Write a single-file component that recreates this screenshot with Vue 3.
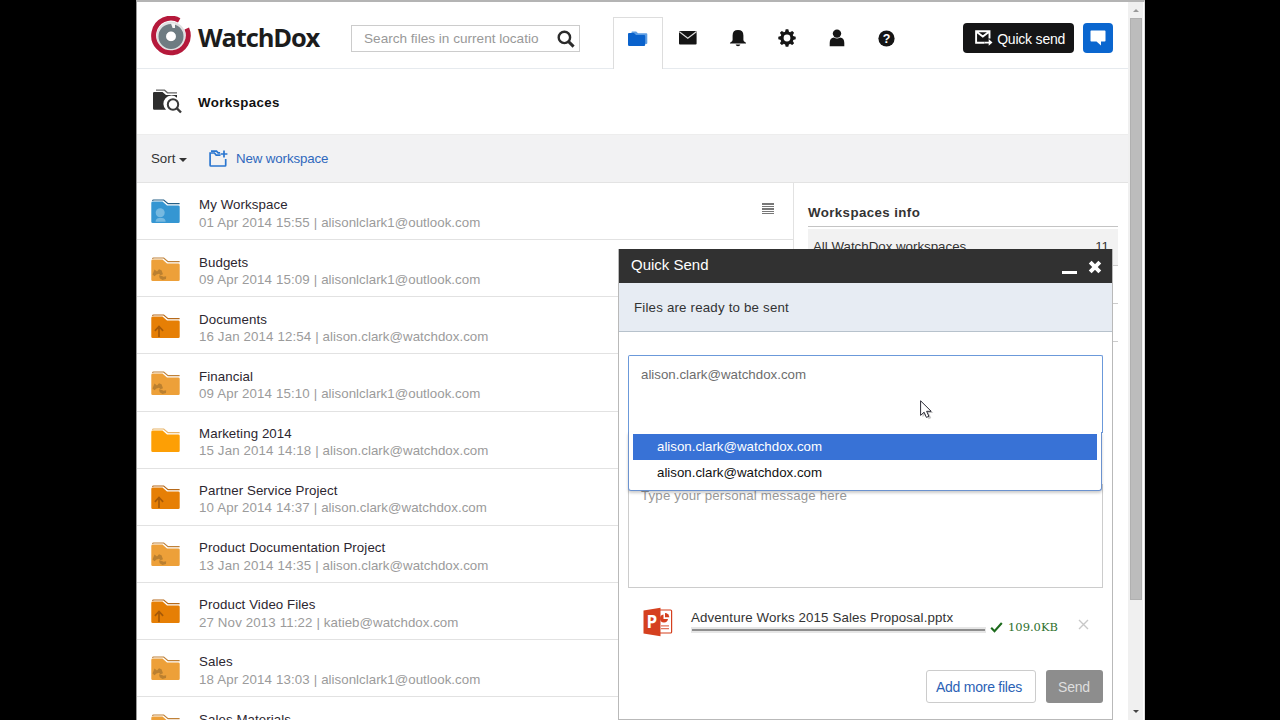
<script setup>
import { ref } from 'vue'

const workspaces = [
  { name: 'My Workspace', date: '01 Apr 2014 15:55', owner: 'alisonlclark1@outlook.com', type: 'personal' },
  { name: 'Budgets', date: '09 Apr 2014 15:09', owner: 'alisonlclark1@outlook.com', type: 'shared' },
  { name: 'Documents', date: '16 Jan 2014 12:54', owner: 'alison.clark@watchdox.com', type: 'upload' },
  { name: 'Financial', date: '09 Apr 2014 15:10', owner: 'alisonlclark1@outlook.com', type: 'shared' },
  { name: 'Marketing 2014', date: '15 Jan 2014 14:18', owner: 'alison.clark@watchdox.com', type: 'plain' },
  { name: 'Partner Service Project', date: '10 Apr 2014 14:37', owner: 'alison.clark@watchdox.com', type: 'upload' },
  { name: 'Product Documentation Project', date: '13 Jan 2014 14:35', owner: 'alison.clark@watchdox.com', type: 'shared' },
  { name: 'Product Video Files', date: '27 Nov 2013 11:22', owner: 'katieb@watchdox.com', type: 'upload' },
  { name: 'Sales', date: '18 Apr 2014 13:03', owner: 'alisonlclark1@outlook.com', type: 'shared' },
  { name: 'Sales Materials', type: 'shared' }
]

const recipient = ref('alison.clark@watchdox.com')
const suggestions = ['alison.clark@watchdox.com', 'alison.clark@watchdox.com']
const selected = ref(0)
const progress = ref(100)

const pick = (i) => {
  selected.value = i
  recipient.value = suggestions[i]
}
</script>

<template>
  <div class="screen">
    <div class="window">
      <div class="page">
        <header class="topbar">
          <div class="brand">
            <svg class="brand-mark" viewBox="0 0 40 40">
              <circle cx="20" cy="20" r="14.6" fill="#dfe1e2" />
              <path d="M28.200 4.300A17.300 17.300 0 1 0 35.800 12.600" fill="none" stroke="#b5193b" stroke-width="4.900" />
              <circle cx="20" cy="20.400" r="8.700" fill="none" stroke="#6e7c82" stroke-width="7.600" />
              <path d="M20 7.600h4v4.400h-2.400z" fill="#f4f5f5" />
              <circle cx="20" cy="20.400" r="4.700" fill="#fff" />
            </svg>
            <span class="brand-name">WatchDox</span>
          </div>
          <div class="search">
            <span>Search files in current locatio</span>
            <svg viewBox="0 0 18 18" width="18" height="18">
              <circle cx="7.400" cy="7.400" r="5.700" fill="none" stroke="#2b2b2b" stroke-width="2.400" />
              <path d="M11.600 11.600l5 5" stroke="#2b2b2b" stroke-width="2.900" />
            </svg>
          </div>
          <nav class="tabs">
            <a class="tab active">
              <svg width="20" height="16" viewBox="0 0 20 16">
                <path d="M3.500 3V1.200q0-.7.7-.7h4l1.800 1.700h8.300q1 0 1 1V12q0 1-1 1h-.8" fill="#5d9de3" />
                <path d="M0 3q0-1 1-1h5l2 2h8q1.200 0 1.200 1.200v8.600q0 1.200-1.200 1.200H1.200Q0 15 0 13.800z" fill="#0a62cc" />
              </svg>
            </a>
            <a class="tab">
              <svg width="18" height="14" viewBox="0 0 18 14">
                <rect width="17.600" height="13.600" rx="1" fill="#151515" />
                <path d="M.3.8l8.500 6.400L17.300.8" fill="none" stroke="#ddd" stroke-width="1.200" />
              </svg>
            </a>
            <a class="tab">
              <svg width="18" height="18" viewBox="0 0 18 18">
                <path d="M3.600 11V6.400Q3.600 1 9 1t5.400 5.400V11q0 1.400 1.900 2.200.8.300.8 1.300H.9q0-1 .8-1.300Q3.600 12.400 3.600 11z" fill="#151515" />
                <path d="M6.600 15.600h4.800q-.5 1.700-2.400 1.700t-2.400-1.700z" fill="#151515" />
              </svg>
            </a>
            <a class="tab">
              <svg width="18" height="18" viewBox="-9 -9 18 18">
                <circle r="5" fill="none" stroke="#151515" stroke-width="3.200" />
                <g fill="#151515">
                  <path v-for="n in 8" :key="n" d="M-2-6L-1.300-8.700H1.300L2-6z" :transform="`rotate(${n * 45})`" />
                </g>
              </svg>
            </a>
            <a class="tab">
              <svg width="16" height="18" viewBox="0 0 16 18">
                <circle cx="8" cy="4.600" r="4.200" fill="#151515" />
                <path d="M.7 17.300v-3.300q0-5 4.300-5.400Q8 10.400 11 8.600q4.300.4 4.300 5.400v3.300z" fill="#151515" />
              </svg>
            </a>
            <a class="tab">
              <svg width="17" height="17" viewBox="0 0 17 17">
                <circle cx="8.500" cy="8.500" r="8.100" fill="#151515" />
                <text x="8.500" y="12.900" text-anchor="middle" class="qmark">?</text>
              </svg>
            </a>
          </nav>
          <button class="quick-send">
            <svg width="18" height="16" viewBox="0 0 18 16">
              <path d="M9.500 12.800H1.100V1.300h13.400V8.500M1.500 1.800l6.300 4.700 6.300-4.700" fill="none" stroke="#fff" stroke-width="1.900" />
              <path d="M9.500 11.700h4.200V9l3.800 3.600-3.800 3.200v-2.200H9.500z" fill="#fff" />
            </svg>
            <span>Quick send</span>
          </button>
          <button class="chat">
            <svg width="16" height="16" viewBox="0 0 16 16">
              <path d="M1.300 .5h13.400q.8 0 .8.8v9.400q0 .8-.8.8h-3.700v4l-4.500-4H1.300q-.8 0-.8-.8V1.300q0-.8.8-.8z" fill="#fff" />
            </svg>
          </button>
        </header>

        <div class="heading">
          <svg width="29" height="25" viewBox="0 0 29 25">
            <path d="M3 1.200h8.500l3 2.600h9.500" fill="none" stroke="#666" stroke-width="1.300" />
            <path d="M0 4.200q0-1.200 1.200-1.200H9.500l3.500 3h11v2.700A8 8 0 0 0 13 20.700H1.200Q0 20.700 0 19.500z" fill="#2e2e2e" />
            <circle cx="20" cy="15.500" r="5.200" fill="#fff" stroke="#3a3a3a" stroke-width="2" />
            <path d="M23.700 19.200l4.300 4.300" stroke="#3a3a3a" stroke-width="2.400" />
          </svg>
          <h1>Workspaces</h1>
        </div>

        <div class="toolbar">
          <span class="sort">Sort<i class="caret"></i></span>
          <a class="new-workspace">
            <svg width="19" height="17" viewBox="0 0 19 17">
              <path d="M11.500 5.200H7.200L5.500 3H1.100v12.300q0 .7.700.7H16q.7 0 .7-.7V9M2 1.200h5.500l1.600 1.600h2" fill="none" stroke="#2a76cf" stroke-width="1.700" />
              <path d="M15 .6v6.800M11.600 4h6.800" stroke="#2a76cf" stroke-width="1.700" />
            </svg>
            <span>New workspace</span>
          </a>
        </div>

        <div class="content">
          <ul class="list">
            <li v-for="(w, i) in workspaces" :key="w.name" class="row">
              <svg class="folder" :class="w.type" viewBox="0 0 29 25">
                <path class="back" d="M1.500 1.800q.2-.8 1-.8h10.200L17 4.600h11.600" />
                <path class="front" d="M.3 4Q.3 2.600 1.700 2.600h9.800L16 6.400h11.300q1.400 0 1.400 1.300v15q0 1.300-1.400 1.300H1.700Q.3 24 .3 22.700z" />
                <g v-if="w.type === 'personal'" fill="#76b9e0">
                  <circle cx="9.200" cy="13.800" r="4.500" />
                  <path d="M4.500 22.700q.3-3.400 3.700-3.700h2.800q3.400.3 3.700 3.700z" />
                </g>
                <path v-if="w.type === 'upload'" d="M8 23v-10.500M3.900 16.800L8 12.400l4.100 4.400" fill="none" stroke="#a65a08" stroke-width="1.700" />
                <g v-if="w.type === 'shared'" fill="#bb8030">
                  <path d="M1.500 17.500l2-5 2.500 2 2-2.300 2.500 1 1.500 4-2.500 1-1.500-1.500-2.500.8-2 1.800z" />
                  <path d="M8 18.300l3 .7 1.500.8 2.700-.6-.2 2.800-3.500.9-2.800-1.600z" />
                </g>
              </svg>
              <div class="info">
                <div class="name">{{ w.name }}</div>
                <div v-if="w.date" class="meta"><span>{{ w.date }} | </span><span class="owner">{{ w.owner }}</span></div>
              </div>
              <span v-if="i === 0" class="menu"><i v-for="n in 5" :key="n"></i></span>
            </li>
          </ul>
          <aside class="side">
            <h2>Workspaces info</h2>
            <div class="stat shaded"><span>All WatchDox workspaces</span><span>11</span></div>
            <div class="stat"></div>
            <div class="stat"></div>
          </aside>
        </div>
      </div>

      <div class="scrollbar">
        <i class="arrow up"></i>
        <div class="thumb"></div>
        <i class="arrow down"></i>
      </div>
    </div>

    <section class="dialog">
      <div class="dialog-head">
        <span>Quick Send</span>
        <i class="minimize"></i>
        <svg width="14" height="14" viewBox="0 0 14 14">
          <path d="M2.200 2.200l9.600 9.600M11.800 2.200l-9.600 9.600" stroke="#fff" stroke-width="4" />
        </svg>
      </div>
      <div class="notice">Files are ready to be sent</div>
      <div class="dialog-body">
        <div class="recipients">
          <span>{{ recipient }}</span>
          <ul class="suggest">
            <li v-for="(s, i) in suggestions" :key="i" :class="{ on: i === selected }" @click="pick(i)">{{ s }}</li>
          </ul>
        </div>
        <div class="message">Type your personal message here</div>
        <div class="file">
          <svg width="30" height="30" viewBox="0 0 30 30">
            <rect x="15" y="3" width="13.600" height="23" rx="1" fill="#fff" stroke="#d5401f" stroke-width="1.200" />
            <path d="M20.500 7.500a4 4 0 1 0 4.500 4.500h-4.500z" fill="#d5401f" />
            <path d="M22 6v4.300h4.300A4.300 4.300 0 0 0 22 6z" fill="#d5401f" />
            <path d="M18 18.800h8M18 21.600h8" stroke="#e0765c" stroke-width="1.300" />
            <path d="M.5 3.500L17.500.7v28.500L.5 26.500z" fill="#d5401f" />
            <text x="8.800" y="21" text-anchor="middle" class="ppt">P</text>
          </svg>
          <div class="file-info">
            <div class="file-name">Adventure Works 2015 Sales Proposal.pptx</div>
            <div class="track"><div class="bar" :style="{ width: progress + '%' }"></div></div>
          </div>
          <svg class="check" width="13" height="11" viewBox="0 0 13 11">
            <path d="M1.200 5.800l3.300 3.400L11.800 1" fill="none" stroke="#1d6b1d" stroke-width="2.100" />
          </svg>
          <span class="size">109.0KB</span>
          <svg class="remove" width="11" height="11" viewBox="0 0 11 11">
            <path d="M1 1l9 9M10 1l-9 9" stroke="#c8c8c8" stroke-width="1.400" />
          </svg>
        </div>
        <div class="actions">
          <button class="add">Add more files</button>
          <button class="send">Send</button>
        </div>
      </div>
    </section>

    <svg class="cursor" width="15" height="20" viewBox="0 0 15 20">
      <path d="M2.500 3v14.300l3.600-3.300 2.600 5.200 2.600-1.300-2.500-4.800h4.500z" fill="#000" opacity=".22" />
      <path d="M.6.8v14.600l3.500-3.200 2.300 5.200 2.500-1.100-2.300-5h4.600z" fill="#fff" stroke="#2a2a35" stroke-width="1" />
    </svg>
  </div>
</template>

<style>
body {
  margin: 0;
  background: #000;
}
</style>

<style scoped>
.screen {
  position: relative;
  width: 1280px;
  height: 720px;
  overflow: hidden;
  background: #000;
  font-family: "Liberation Sans", Arial, sans-serif;
  font-size: 13.3px;
  color: #333;
}

.screen * {
  box-sizing: border-box;
}

button {
  font: inherit;
  padding: 0;
  border: 0;
}

ul, h1, h2 {
  margin: 0;
  padding: 0;
  list-style: none;
}

.window {
  width: 1009px;
  height: 720px;
  margin-left: 136px;
  display: flex;
  background: #fff;
  border-top: 2px solid #b4b4b4;
  border-left: 1px solid #999;
  border-right: 1px solid #ddd;
  overflow: hidden;
}

.page {
  width: 991px;
}

.topbar {
  display: flex;
  height: 67px;
  padding-left: 14px;
  border-bottom: 1px solid #e6eaee;
}

.brand {
  display: flex;
  width: 200px;
}

.brand-mark {
  width: 40px;
  height: 40px;
  margin-top: 14px;
}

.brand-name {
  margin: 17px 0 0 7px;
  font-family: "Open Sans", sans-serif;
  font-weight: 700;
  font-size: 25.5px;
  line-height: 36px;
  letter-spacing: -1.15px;
  color: #1c1c1c;
}

.search {
  display: flex;
  align-items: center;
  justify-content: space-between;
  width: 229px;
  height: 27px;
  margin-top: 23px;
  padding: 0 4px 0 12px;
  border: 1px solid #ccc;
  color: #999;
  font-size: 13.6px;
}

.tabs {
  display: flex;
  height: 51px;
  margin: 15px 0 0 33px;
}

.tab {
  display: flex;
  align-items: center;
  justify-content: center;
  width: 49.7px;
  height: 51px;
  padding: 0 0 9px 1px;
}

.tab.active {
  height: 52px;
  padding: 0 0 10px;
  background: #fff;
  border: 1px solid #ddd;
  border-bottom: 0;
}

.qmark {
  font: bold 12.5px "Liberation Sans", sans-serif;
  fill: #fff;
}

.quick-send {
  display: flex;
  align-items: center;
  width: 111px;
  height: 30px;
  margin: 21px 0 0 52px;
  padding-left: 12px;
  gap: 4px;
  border-radius: 4px;
  background: #151516;
  color: #fff;
  font-size: 14px;
  letter-spacing: -0.2px;
}

.quick-send span {
  margin-top: 1px;
}

.chat {
  display: flex;
  align-items: center;
  justify-content: center;
  width: 30px;
  height: 30px;
  margin: 21px 0 0 9px;
  border-radius: 4px;
  background: #0a66cf;
}

.heading {
  display: flex;
  align-items: center;
  height: 65px;
  padding-left: 16px;
  gap: 16px;
}

.heading h1 {
  padding-top: 1px;
  font-size: 13.3px;
  letter-spacing: 0.38px;
  color: #111;
}

.toolbar {
  display: flex;
  align-items: center;
  height: 49px;
  padding-left: 14px;
  background: #f2f2f3;
  border-top: 1px solid #ededed;
  border-bottom: 1px solid #e3e3e3;
}

.sort {
  display: flex;
  align-items: center;
  width: 58px;
}

.caret {
  margin: 2px 0 0 4px;
  border: 4px solid transparent;
  border-top-color: #333;
  border-bottom: 0;
}

.new-workspace {
  display: flex;
  align-items: center;
  gap: 8px;
  color: #2f68bd;
  letter-spacing: -0.12px;
}

.content {
  display: flex;
  height: 540px;
}

.list {
  width: 656px;
}

.row {
  display: flex;
  height: 57.14px;
  padding: 13.4px 0 0 14px;
  border-bottom: 1px solid #e2e2e2;
}

.folder {
  width: 29px;
  height: 25px;
  margin-top: 3px;
}

.folder .front {
  fill: #eda039;
}

.folder .back {
  fill: none;
  stroke: #bf8138;
  stroke-width: 1.2px;
}

.folder.personal .front {
  fill: #3596d2;
}

.folder.personal .back {
  stroke: #245f86;
}

.folder.upload .front {
  fill: #e67f05;
}

.folder.upload .back {
  stroke: #b5691a;
}

.folder.plain .front {
  fill: #fd9f05;
}

.folder.plain .back {
  stroke: #e8b468;
}

.info {
  flex: 1;
  margin-left: 19px;
  line-height: 17.4px;
  white-space: nowrap;
}

.name {
  color: #2c2630;
  letter-spacing: 0.08px;
}

.meta {
  color: #9b9b9b;
  letter-spacing: 0.13px;
}

.owner {
  letter-spacing: 0.03px;
}

.menu {
  display: flex;
  flex-direction: column;
  gap: 1px;
  width: 12px;
  margin: 7px 19px 0 0;
}

.menu i {
  height: 1.4px;
  background: #777;
}

.side {
  width: 335px;
  padding: 20px 10px 0 14px;
  border-left: 1px solid #e2e2e2;
}

.side h2 {
  height: 24px;
  padding-top: 1px;
  border-bottom: 1px solid #c4c4c4;
  font-size: 13.3px;
  line-height: 17px;
  letter-spacing: 0.4px;
}

.stat {
  display: flex;
  justify-content: space-between;
  height: 38px;
  padding: 10px 9px 0 5px;
  border-bottom: 1px solid #ccc;
}

.stat.shaded {
  height: 37px;
  margin-top: 2px;
  background: #f2f2f2;
}

.scrollbar {
  display: flex;
  flex-direction: column;
  align-items: center;
  width: 15px;
  background: #f0f0f0;
}

.thumb {
  width: 12px;
  height: 582px;
  margin-top: 6px;
  background: #bcbcbc;
  border: 1px solid #b0b0b0;
}

.arrow {
  border: 3.5px solid transparent;
}

.arrow.up {
  margin-top: 7px;
  border-top: 0;
  border-bottom-color: #999;
}

.arrow.down {
  margin-top: 110px;
  border-bottom: 0;
  border-top-color: #444;
}

.dialog {
  position: absolute;
  left: 618px;
  top: 249px;
  width: 495px;
  height: 471px;
  background: #fff;
  border: 1px solid #b9b9b9;
  border-top: 0;
}

.dialog-head {
  display: flex;
  height: 34px;
  padding: 0 10px 0 12px;
  background: #313131;
  color: #fff;
  font-size: 15px;
  line-height: 32px;
}

.dialog-head span {
  flex: 1;
}

.dialog-head svg {
  margin-top: 11px;
}

.minimize {
  width: 15px;
  height: 3px;
  margin: 22px 11px 0 0;
  background: #fff;
}

.notice {
  height: 49px;
  padding-left: 15px;
  background: #e7ecf3;
  border-bottom: 1px solid #b7c2cc;
  line-height: 50px;
  letter-spacing: 0.19px;
}

.dialog-body {
  padding: 23px 9px 0;
}

.recipients {
  position: relative;
  height: 78px;
  padding: 11px 12px;
  border: 1px solid #6b99da;
  border-bottom: 0;
  border-radius: 2px 2px 0 0;
  color: #6d6d6d;
  line-height: 16px;
}

.suggest {
  position: absolute;
  left: -1px;
  top: 76px;
  width: 474px;
  height: 59px;
  padding: 2px 4px 0;
  background: #fff;
  border: 1px solid #6b92cf;
  border-top: 0;
  border-radius: 0 0 3px 3px;
  box-shadow: 0 2px 3px rgba(0, 0, 0, 0.2);
  color: #111;
}

.suggest li {
  height: 26px;
  padding-left: 24px;
  line-height: 26px;
}

.suggest .on {
  background: #3872d6;
  color: #fff;
}

.message {
  height: 104px;
  margin-top: 51px;
  padding: 4px 12px;
  border: 1px solid #ccc;
  border-top: 0;
  color: #999;
  line-height: 16px;
  letter-spacing: 0.16px;
}

.file {
  display: flex;
  height: 30px;
  margin: 19px 0 0 15px;
}

.ppt {
  font: bold 17px "Open Sans", sans-serif;
  fill: #fff;
}

.file-info {
  width: 295px;
  margin-left: 18px;
}

.file-name {
  height: 20px;
  line-height: 22px;
  letter-spacing: 0.13px;
  white-space: nowrap;
}

.track {
  height: 6px;
  padding: 2px 1px;
  background: #e6e6e6;
}

.bar {
  height: 2px;
  background: #8e8e8e;
}

.check {
  margin: 15px 0 0 4px;
}

.size {
  width: 54px;
  margin: 12px 0 0 5px;
  font-family: "DejaVu Serif", "Liberation Serif", serif;
  font-size: 11.5px;
  line-height: 17px;
  color: #2d6f2d;
}

.remove {
  margin: 12px 0 0 16px;
}

.actions {
  display: flex;
  justify-content: flex-end;
  gap: 10px;
  margin-top: 33px;
}

.actions button {
  height: 33px;
  border-radius: 3px;
  font-size: 14px;
}

.actions .add {
  width: 110px;
  padding-right: 4px;
  background: #fff;
  border: 1px solid #ccc;
  color: #2b62b5;
  letter-spacing: -0.25px;
}

.actions .send {
  width: 57px;
  padding-right: 1px;
  background: #8d8d8d;
  color: #dedede;
  letter-spacing: -0.2px;
}

.cursor {
  position: absolute;
  left: 920px;
  top: 400px;
}
</style>
